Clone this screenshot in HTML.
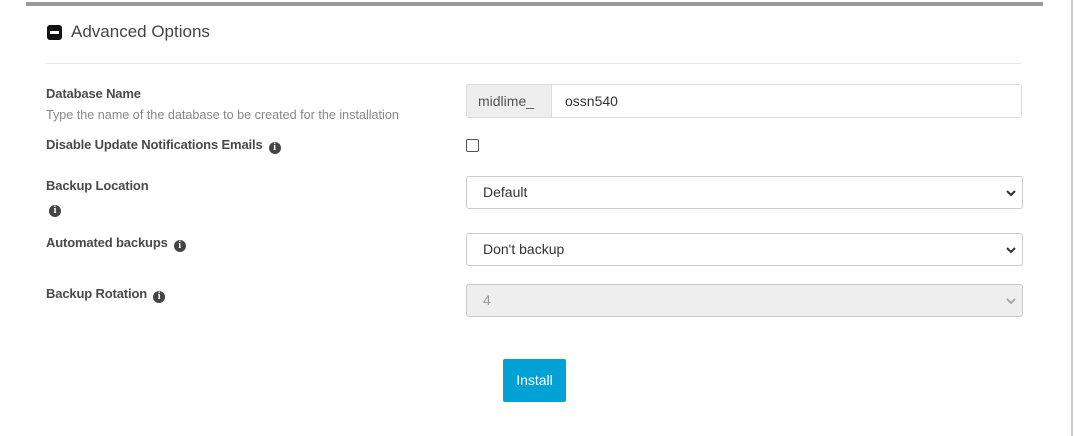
<!DOCTYPE html>
<html><head><style>
body{margin:0;width:1074px;height:436px;background:#fff;font-family:"Liberation Sans",sans-serif;position:relative;overflow:hidden;color:#444}
.a{position:absolute}
.lbl{font-size:13px;font-weight:bold;color:#4a4a4a;letter-spacing:-0.15px}
.info{display:inline-block;width:12px;height:12px;border-radius:50%;background:#444;color:#fff;font-size:10px;font-weight:bold;text-align:center;line-height:12px;font-family:"Liberation Serif",serif;vertical-align:-1px;margin-left:6px}
.sel{position:absolute;left:466px;width:557px;height:33px;border:1px solid #ccc;border-radius:3px;background:#fff;font-size:14px;color:#333;box-sizing:border-box;padding-left:16px;line-height:31px}
.sel svg{position:absolute;right:6px;top:12px}
</style></head><body>
<div class="a" style="left:26px;top:2px;width:1017px;height:4px;background:#999"></div>
<div class="a" style="left:1071px;top:0;width:2px;height:436px;background:#ccc"></div>
<div class="a" style="left:47px;top:25px;width:15px;height:15px;background:#111;border-radius:3px"><div class="a" style="left:3px;top:6px;width:9px;height:3px;background:#fff"></div></div>
<div class="a" style="left:71px;top:22px;font-size:17px;color:#444">Advanced Options</div>
<div class="a" style="left:46px;top:63px;width:975px;height:1px;background:#e8e8e8"></div>
<div class="a lbl" style="left:46px;top:86px">Database Name</div>
<div class="a" style="left:46px;top:108px;font-size:12.6px;color:#888">Type the name of the database to be created for the installation</div>
<div class="a" style="left:466px;top:84px;width:556px;height:34px;border:1px solid #ddd;border-radius:3px;box-sizing:border-box"></div>
<div class="a" style="left:466px;top:84px;width:86px;height:34px;background:#eee;border:1px solid #ddd;border-radius:3px 0 0 3px;box-sizing:border-box;font-size:14px;color:#555;line-height:32px;padding-left:11px">midlime_</div>
<div class="a" style="left:565px;top:93px;font-size:14px;color:#333">ossn540</div>
<div class="a lbl" style="left:46px;top:137px">Disable Update Notifications Emails<span class="info">i</span></div>
<div class="a" style="left:466px;top:139px;width:13px;height:13px;border:1px solid #555;border-radius:2px;box-sizing:border-box"></div>
<div class="a lbl" style="left:46px;top:178px">Backup Location</div>
<div class="a" style="left:44px;top:199px"><span class="info" style="margin-left:5px">i</span></div>
<div class="sel" style="top:176px">Default<svg width="10" height="8"><path d="M1 2l4 4 4-4" stroke="#333" stroke-width="2" fill="none"/></svg></div>
<div class="a lbl" style="left:46px;top:235px">Automated backups<span class="info">i</span></div>
<div class="sel" style="top:233px">Don't backup<svg width="10" height="8"><path d="M1 2l4 4 4-4" stroke="#333" stroke-width="2" fill="none"/></svg></div>
<div class="a lbl" style="left:46px;top:286px">Backup Rotation<span class="info">i</span></div>
<div class="sel" style="top:284px;background:#eee;color:#999">4<svg width="10" height="8"><path d="M1 2l4 4 4-4" stroke="#aaa" stroke-width="2" fill="none"/></svg></div>
<div class="a" style="left:503px;top:359px;width:63px;height:43px;background:#00a2d6;border-radius:2px;color:#fff;font-size:14px;text-align:center;line-height:43px">Install</div>
</body></html>
